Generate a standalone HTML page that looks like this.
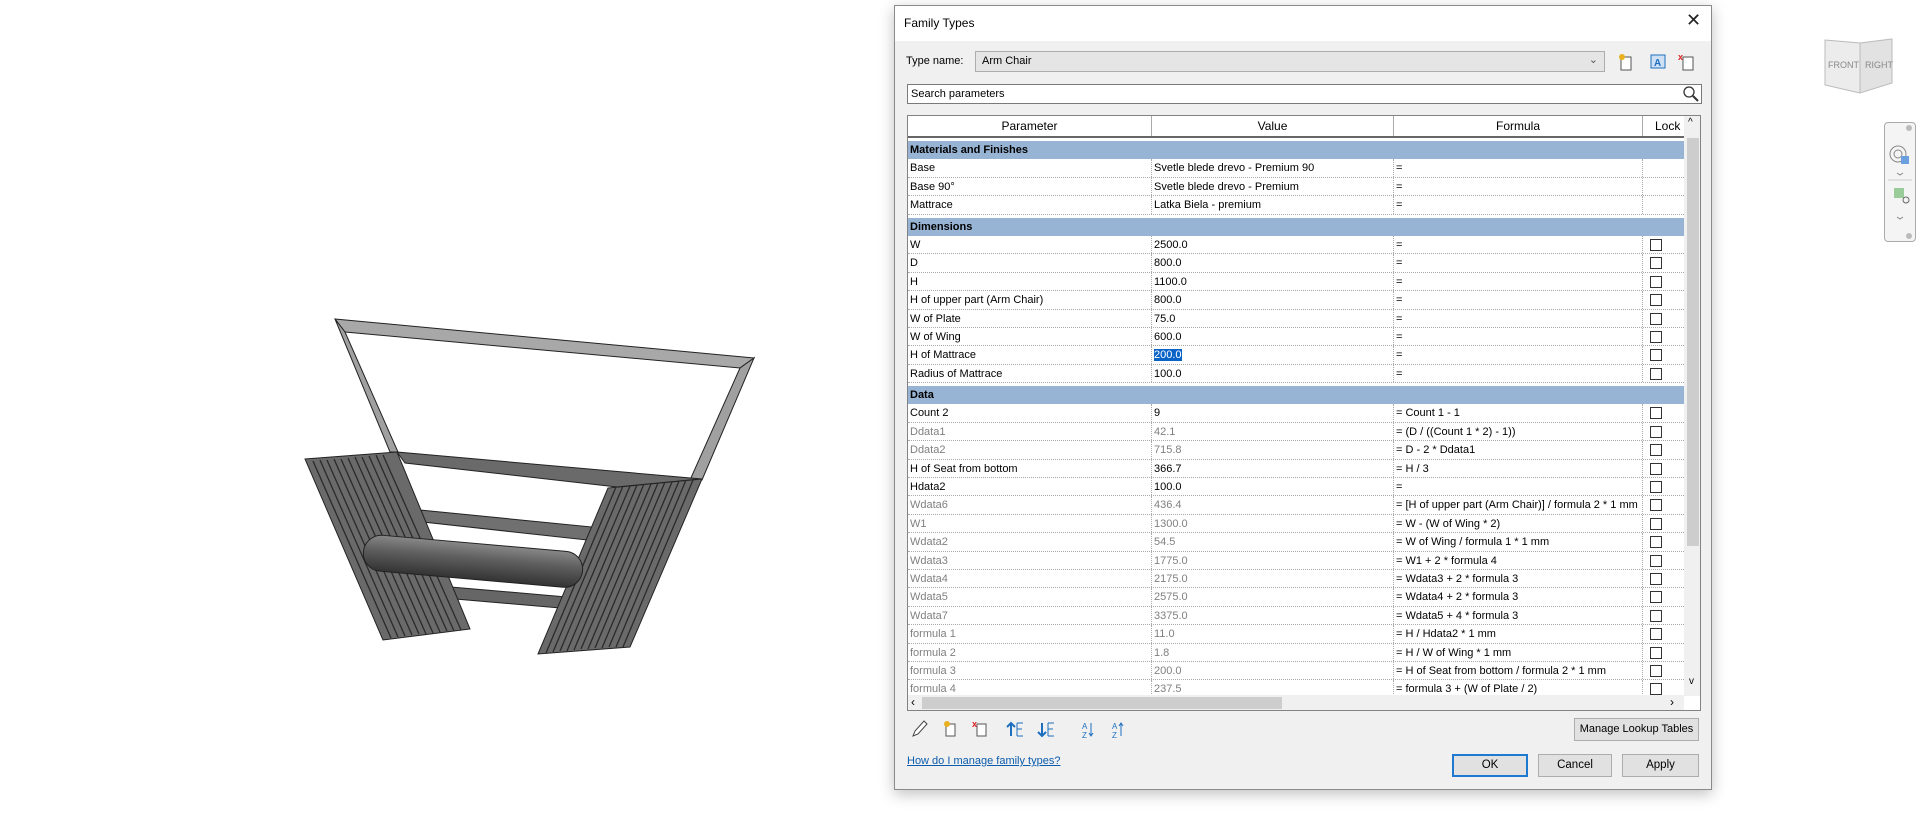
<!DOCTYPE html>
<html><head><meta charset="utf-8"><style>
*{box-sizing:border-box;margin:0;padding:0}
body{width:1920px;height:814px;background:#fff;position:relative;overflow:hidden;font-family:"Liberation Sans",sans-serif;font-size:12px;color:#000}
.dlg{position:absolute;left:894px;top:5px;width:818px;height:785px;background:#f0f0f0;border:1px solid #8a8a8a;box-shadow:0 4px 14px rgba(0,0,0,.25)}
.tb{position:absolute;left:0;top:0;width:100%;height:35px;background:#fff}
.abs{position:absolute}
.combo{left:80px;top:45px;width:630px;height:21px;background:#e5e5e5;border:1px solid #adadad;padding:3px 6px;font-size:11px}
.search{left:12px;top:78px;width:795px;height:20px;background:#fff;border:1px solid #7a7a7a;padding:3px 3px;font-size:11px}
.tbl{left:12px;top:109px;width:794px;height:596px;background:#fff;border:1px solid #828282;overflow:hidden}
.hdr{position:absolute;left:0;top:0;height:22px;width:776px;display:flex;border-bottom:2px solid #666;background:#fff}
.hdr div{border-right:1px solid #aaa;text-align:center;line-height:21px}
.rows{position:absolute;left:0;top:24px;width:776px;font-size:11px}
.r{display:flex;height:18.4px;line-height:18px;border-bottom:1px dotted #aaa;background:#fff}
.r div{padding-left:2px;white-space:nowrap;overflow:hidden;border-right:1px dotted #aaa}
.g div{color:#808080}
.g div.f{color:#000}
.sec{height:18.4px;line-height:18px;background:#98b4d4;font-weight:bold;padding-left:2px;margin-top:3px}
.sec.first{margin-top:1px}
.c1{width:244px}.c2{width:242px}.c3{width:249px}.c4{width:41px;position:relative;border-right:none!important}
.cb{position:absolute;left:7px;top:3px;width:12px;height:12px;border:1px solid #333;background:#fff}
.vs{position:absolute;left:776px;top:0;width:18px;height:580px;background:#f0f0f0}
.hs{position:absolute;left:0;top:579px;width:776px;height:16px;background:#f0f0f0}
.btn{height:23px;background:#e1e1e1;border:1px solid #adadad;text-align:center;line-height:21px;font-size:11.5px}
</style></head><body>

<svg class="abs" style="left:0;top:0" width="1920" height="814">
<g stroke="#222" stroke-width="1">
<polygon points="335,319 754,358 740,368 345,332" fill="#a8a8a8"/>
<polygon points="335,319 345,332 398,452 390,452" fill="#a0a0a0"/>
<polygon points="754,358 740,368 690,480 702,480" fill="#a0a0a0"/>
<polygon points="397,452 702,479 690,480 617,487 405,463" fill="#6a6a6a"/>
<polygon points="420,510 592,527 587,540 423,522" fill="#707070"/>
<polygon points="370,580 567,597 560,608 373,592" fill="#666"/>
<polygon points="305,459 397,452 470,629 383,640" fill="#6a6a6a"/>
<polygon points="608,488 702,479 630,647 538,654" fill="#6a6a6a"/>
</g>
<g stroke="#2a2a2a" stroke-width="1.3">
<line x1="313" y1="461" x2="391" y2="638"/><line x1="320" y1="460" x2="398" y2="637"/><line x1="327" y1="460" x2="405" y2="636"/><line x1="334" y1="459" x2="412" y2="635"/><line x1="341" y1="459" x2="419" y2="634"/><line x1="348" y1="458" x2="426" y2="634"/><line x1="355" y1="457" x2="433" y2="633"/><line x1="362" y1="457" x2="440" y2="632"/><line x1="369" y1="456" x2="447" y2="631"/><line x1="376" y1="455" x2="454" y2="631"/><line x1="383" y1="455" x2="461" y2="630"/>
<line x1="616" y1="487" x2="546" y2="653"/><line x1="623" y1="486" x2="553" y2="652"/><line x1="630" y1="486" x2="560" y2="651"/><line x1="637" y1="485" x2="567" y2="651"/><line x1="644" y1="484" x2="574" y2="650"/><line x1="651" y1="484" x2="581" y2="649"/><line x1="658" y1="483" x2="588" y2="649"/><line x1="665" y1="482" x2="595" y2="648"/><line x1="672" y1="482" x2="602" y2="648"/><line x1="679" y1="481" x2="609" y2="647"/><line x1="686" y1="480" x2="616" y2="647"/><line x1="693" y1="480" x2="623" y2="647"/>
</g>
<defs><linearGradient id="cu" x1="0" y1="0" x2="0" y2="1"><stop offset="0" stop-color="#888"/><stop offset=".4" stop-color="#606060"/><stop offset="1" stop-color="#333"/></linearGradient></defs>
<rect x="363" y="543" width="220" height="36" rx="18" fill="url(#cu)" stroke="#222" transform="rotate(5 470 561)"/>
</svg>

<svg class="abs" style="left:1820px;top:35px" width="80" height="65">
<polygon points="5,5 40,8 40,58 5,50" fill="#ececec" stroke="#bbb"/>
<polygon points="40,8 72,4 72,48 40,58" fill="#e2e2e2" stroke="#bbb"/>
<text x="8" y="33" font-size="9" fill="#888" font-family="Liberation Sans">FRONT</text>
<text x="45" y="33" font-size="9" fill="#888" font-family="Liberation Sans">RIGHT</text>
</svg>
<div class="abs" style="left:1884px;top:122px;width:32px;height:120px;border:1px solid #aaa;border-radius:4px;background:#f4f4f4"></div>
<svg class="abs" style="left:1884px;top:122px" width="32" height="120">
<circle cx="25" cy="6" r="3" fill="#bbb"/><circle cx="25" cy="114" r="3" fill="#bbb"/>
<circle cx="14" cy="32" r="8" fill="none" stroke="#888"/><circle cx="14" cy="32" r="4" fill="none" stroke="#888"/>
<rect x="17" y="34" width="8" height="8" fill="#6aa0e0"/>
<line x1="4" y1="58" x2="28" y2="58" stroke="#ccc"/>
<rect x="10" y="66" width="10" height="10" fill="#9c9"/><circle cx="22" cy="78" r="3" fill="none" stroke="#666"/>
<path d="M13 51l3 2 3-2M13 95l3 2 3-2" stroke="#888" fill="none"/>
</svg>

<div class="dlg">
<div class="tb"></div>
<div class="abs" style="left:9px;top:10px;font-size:12px">Family Types</div>
<div class="abs" style="left:791px;top:4px;font-size:18px;color:#222">✕</div>
<div class="abs" style="left:11px;top:49px;font-size:11px">Type name:</div>
<div class="abs combo">Arm Chair<span style="position:absolute;right:6px;top:1px;color:#555">⌄</span></div>
<svg class="abs" style="left:722px;top:45px" width="90" height="22">
<rect x="4" y="6" width="10" height="13" fill="#fff" stroke="#555"/><circle cx="5" cy="6" r="3" fill="#e9b020"/>
<rect x="34" y="4" width="14" height="13" fill="#cfe0f5" stroke="#1e6fc0"/><text x="37" y="15" font-size="10" fill="#1e6fc0" font-weight="bold">A</text>
<rect x="66" y="6" width="10" height="13" fill="#fff" stroke="#555"/><text x="61" y="9" font-size="9" fill="#d22" font-weight="bold">x</text>
</svg>
<div class="abs search">Search parameters<svg style="position:absolute;right:2px;top:1px" width="16" height="16"><circle cx="6" cy="6" r="5" fill="none" stroke="#333" stroke-width="1.3"/><line x1="10" y1="10" x2="15" y2="15" stroke="#333" stroke-width="2"/></svg></div>

<div class="abs tbl">
<div class="hdr"><div class="c1">Parameter</div><div class="c2">Value</div><div class="c3">Formula</div><div style="width:41px;text-align:left;padding-left:12px;border:none">Lock</div></div>
<div class="rows">
<div class="sec first">Materials and Finishes</div>
<div class="r"><div class="c1">Base</div><div class="c2">Svetle blede drevo - Premium 90</div><div class="c3">=</div><div class="c4"></div></div>
<div class="r"><div class="c1">Base 90°</div><div class="c2">Svetle blede drevo - Premium</div><div class="c3">=</div><div class="c4"></div></div>
<div class="r"><div class="c1">Mattrace</div><div class="c2">Latka Biela - premium</div><div class="c3">=</div><div class="c4"></div></div>
<div class="sec">Dimensions</div>
<div class="r"><div class="c1">W</div><div class="c2">2500.0</div><div class="c3">=</div><div class="c4"><span class="cb"></span></div></div>
<div class="r"><div class="c1">D</div><div class="c2">800.0</div><div class="c3">=</div><div class="c4"><span class="cb"></span></div></div>
<div class="r"><div class="c1">H</div><div class="c2">1100.0</div><div class="c3">=</div><div class="c4"><span class="cb"></span></div></div>
<div class="r"><div class="c1">H of upper part (Arm Chair)</div><div class="c2">800.0</div><div class="c3">=</div><div class="c4"><span class="cb"></span></div></div>
<div class="r"><div class="c1">W of Plate</div><div class="c2">75.0</div><div class="c3">=</div><div class="c4"><span class="cb"></span></div></div>
<div class="r"><div class="c1">W of Wing</div><div class="c2">600.0</div><div class="c3">=</div><div class="c4"><span class="cb"></span></div></div>
<div class="r"><div class="c1">H of Mattrace</div><div class="c2"><span style="background:#0a64c8;color:#fff">200.0</span></div><div class="c3">=</div><div class="c4"><span class="cb"></span></div></div>
<div class="r"><div class="c1">Radius of Mattrace</div><div class="c2">100.0</div><div class="c3">=</div><div class="c4"><span class="cb"></span></div></div>
<div class="sec">Data</div>
<div class="r"><div class="c1">Count 2</div><div class="c2">9</div><div class="c3">= Count 1 - 1</div><div class="c4"><span class="cb"></span></div></div>
<div class="r g"><div class="c1">Ddata1</div><div class="c2">42.1</div><div class="c3 f">= (D / ((Count 1 * 2) - 1))</div><div class="c4"><span class="cb"></span></div></div>
<div class="r g"><div class="c1">Ddata2</div><div class="c2">715.8</div><div class="c3 f">= D - 2 * Ddata1</div><div class="c4"><span class="cb"></span></div></div>
<div class="r"><div class="c1">H of Seat from bottom</div><div class="c2">366.7</div><div class="c3">= H / 3</div><div class="c4"><span class="cb"></span></div></div>
<div class="r"><div class="c1">Hdata2</div><div class="c2">100.0</div><div class="c3">=</div><div class="c4"><span class="cb"></span></div></div>
<div class="r g"><div class="c1">Wdata6</div><div class="c2">436.4</div><div class="c3 f">= [H of upper part (Arm Chair)] / formula 2 * 1 mm</div><div class="c4"><span class="cb"></span></div></div>
<div class="r g"><div class="c1">W1</div><div class="c2">1300.0</div><div class="c3 f">= W - (W of Wing * 2)</div><div class="c4"><span class="cb"></span></div></div>
<div class="r g"><div class="c1">Wdata2</div><div class="c2">54.5</div><div class="c3 f">= W of Wing / formula 1 * 1 mm</div><div class="c4"><span class="cb"></span></div></div>
<div class="r g"><div class="c1">Wdata3</div><div class="c2">1775.0</div><div class="c3 f">= W1 + 2 * formula 4</div><div class="c4"><span class="cb"></span></div></div>
<div class="r g"><div class="c1">Wdata4</div><div class="c2">2175.0</div><div class="c3 f">= Wdata3 + 2 * formula 3</div><div class="c4"><span class="cb"></span></div></div>
<div class="r g"><div class="c1">Wdata5</div><div class="c2">2575.0</div><div class="c3 f">= Wdata4 + 2 * formula 3</div><div class="c4"><span class="cb"></span></div></div>
<div class="r g"><div class="c1">Wdata7</div><div class="c2">3375.0</div><div class="c3 f">= Wdata5 + 4 * formula 3</div><div class="c4"><span class="cb"></span></div></div>
<div class="r g"><div class="c1">formula 1</div><div class="c2">11.0</div><div class="c3 f">= H / Hdata2 * 1 mm</div><div class="c4"><span class="cb"></span></div></div>
<div class="r g"><div class="c1">formula 2</div><div class="c2">1.8</div><div class="c3 f">= H / W of Wing * 1 mm</div><div class="c4"><span class="cb"></span></div></div>
<div class="r g"><div class="c1">formula 3</div><div class="c2">200.0</div><div class="c3 f">= H of Seat from bottom / formula 2 * 1 mm</div><div class="c4"><span class="cb"></span></div></div>
<div class="r g"><div class="c1">formula 4</div><div class="c2">237.5</div><div class="c3 f">= formula 3 + (W of Plate / 2)</div><div class="c4"><span class="cb"></span></div></div>
</div>
<div class="vs"><div style="position:absolute;left:3px;top:22px;width:12px;height:408px;background:#cdcdcd"></div><div style="position:absolute;left:4px;top:1px;font-size:10px">^</div><div style="position:absolute;left:5px;top:560px;font-size:10px">v</div></div>
<div class="hs"><div style="position:absolute;left:14px;top:2px;width:360px;height:12px;background:#cdcdcd"></div><span style="position:absolute;left:3px;top:0;font-size:12px">‹</span><span style="position:absolute;left:762px;top:0;font-size:12px">›</span></div>
</div>

<svg class="abs" style="left:14px;top:712px" width="220" height="22">
<path d="M4 18l2-5 9-10 3 3-9 10z" fill="#fff" stroke="#444"/>
<rect x="37" y="6" width="9" height="12" fill="#fff" stroke="#555"/><circle cx="38" cy="6" r="3" fill="#e9b020"/>
<rect x="68" y="6" width="9" height="12" fill="#fff" stroke="#555"/><text x="63" y="9" font-size="9" fill="#d22" font-weight="bold">x</text>
<path d="M102 18V5M98 9l4-4 4 4" stroke="#1e6fc0" stroke-width="2" fill="none"/><path d="M108 5h6M108 11h5M108 18h6M108 5v13" stroke="#1e6fc0" fill="none"/>
<path d="M133 5v13M129 14l4 4 4-4" stroke="#1e6fc0" stroke-width="2" fill="none"/><path d="M139 5h6M139 11h5M139 18h6M139 5v13" stroke="#1e6fc0" fill="none"/>
<text x="173" y="11" font-size="8" fill="#1e6fc0">A</text><text x="173" y="20" font-size="8" fill="#1e6fc0">Z</text><path d="M182 5v13M180 15l2 3 2-3" stroke="#1e6fc0" fill="none"/>
<text x="203" y="11" font-size="8" fill="#1e6fc0">A</text><text x="203" y="20" font-size="8" fill="#1e6fc0">Z</text><path d="M212 18V5M210 8l2-3 2 3" stroke="#1e6fc0" fill="none"/>
</svg>
<div class="abs btn" style="left:679px;top:712px;width:125px;font-size:11px">Manage Lookup Tables</div>
<div class="abs" style="left:12px;top:749px;font-size:11px;color:#0b5cad;text-decoration:underline">How do I manage family types?</div>
<div class="abs btn" style="left:557px;top:748px;width:76px;border:2px solid #1e7ad0;line-height:19px">OK</div>
<div class="abs btn" style="left:643px;top:748px;width:74px">Cancel</div>
<div class="abs btn" style="left:727px;top:748px;width:77px">Apply</div>
</div>
</body></html>
